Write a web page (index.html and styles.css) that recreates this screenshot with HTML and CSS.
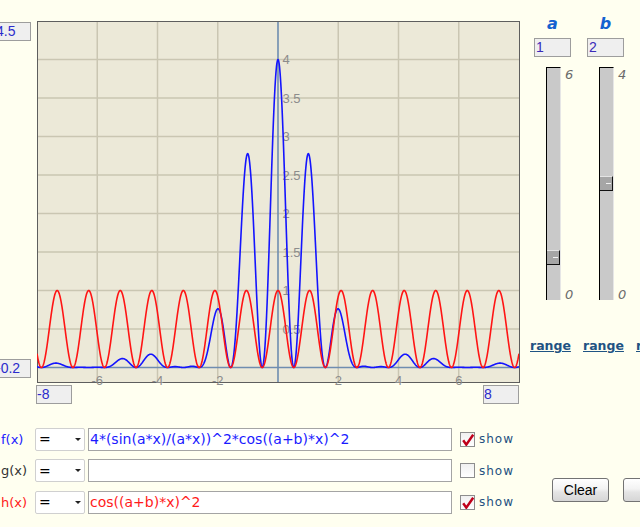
FILE: index.html
```html
<!DOCTYPE html>
<html>
<head>
<meta charset="utf-8">
<title>Function plotter</title>
<link rel="stylesheet" href="styles.css">
</head>
<body>
<div class="app">
  <div class="top">
    <div class="graph">
      <div class="ycol">
        <div class="numbox ybox">4.5</div>
        <div class="numbox ybox">-0.2</div>
      </div>
      <div class="plot">
        <svg class="plot-svg" width="483" height="366" viewBox="0 0 483 366">
          <defs><clipPath id="clip"><rect x="0" y="0" width="482" height="361.5"/></clipPath></defs>
          <rect class="bg" x="0" y="0" width="483" height="362"/>
          <g class="grid">
            <line x1="60.25" y1="0" x2="60.25" y2="362"/>
            <line x1="120.5" y1="0" x2="120.5" y2="362"/>
            <line x1="180.75" y1="0" x2="180.75" y2="362"/>
            <line x1="301.25" y1="0" x2="301.25" y2="362"/>
            <line x1="361.5" y1="0" x2="361.5" y2="362"/>
            <line x1="421.75" y1="0" x2="421.75" y2="362"/>
            <line x1="0" y1="38.5" x2="483" y2="38.5"/>
            <line x1="0" y1="77" x2="483" y2="77"/>
            <line x1="0" y1="115.5" x2="483" y2="115.5"/>
            <line x1="0" y1="154" x2="483" y2="154"/>
            <line x1="0" y1="192.5" x2="483" y2="192.5"/>
            <line x1="0" y1="231" x2="483" y2="231"/>
            <line x1="0" y1="269.5" x2="483" y2="269.5"/>
            <line x1="0" y1="308" x2="483" y2="308"/>
          </g>
          <g class="axes">
            <line x1="241" y1="0" x2="241" y2="362"/>
            <line x1="0" y1="346.5" x2="483" y2="346.5"/>
          </g>
          <rect class="frame" x="0.5" y="0.5" width="482" height="361"/>
          <g class="ticks">
            <text x="245.5" y="43.2">4</text>
            <text x="245.5" y="81.7">3.5</text>
            <text x="245.5" y="120.2">3</text>
            <text x="245.5" y="158.7">2.5</text>
            <text x="245.5" y="197.2">2</text>
            <text x="245.5" y="235.7">1.5</text>
            <text x="245.5" y="274.2">1</text>
            <text x="245.5" y="312.7">0.5</text>
            <text class="xt" x="60.25" y="363.5">-6</text>
            <text class="xt" x="120.5" y="363.5">-4</text>
            <text class="xt" x="180.75" y="363.5">-2</text>
            <text class="xt" x="301.25" y="363.5">2</text>
            <text class="xt" x="361.5" y="363.5">4</text>
            <text class="xt" x="421.75" y="363.5">6</text>
          </g>
          <g clip-path="url(#clip)">
            <path id="curve-f" class="curve cf" d=""/>
            <path id="curve-h" class="curve ch" d=""/>
          </g>
        </svg>
      </div>
      <div class="xrow">
        <div class="numbox xbox">-8</div>
        <div class="numbox xbox">8</div>
      </div>
    </div>

    <div class="params">
      <div class="param">
        <div class="pname">a</div>
        <div class="numbox pbox">1</div>
        <div class="slider">
          <div class="track"><div class="thumb" style="top:182px"></div></div>
          <div class="scale"><span>6</span><span>0</span></div>
        </div>
        <a class="range" href="#">range</a>
      </div>
      <div class="param">
        <div class="pname">b</div>
        <div class="numbox pbox">2</div>
        <div class="slider">
          <div class="track"><div class="thumb" style="top:108px"></div></div>
          <div class="scale"><span>4</span><span>0</span></div>
        </div>
        <a class="range" href="#">range</a>
      </div>
      <div class="param">
        <div class="pname"></div>
        <div class="numbox pbox"></div>
        <div class="slider">
          <div class="track"></div>
        </div>
        <a class="range" href="#">range</a>
      </div>
    </div>
  </div>

  <div class="eqs">
    <div class="rows">
      <div class="row">
        <div class="fn blue">f(x)</div>
        <div class="sel"><span class="eq">=</span><span class="arrow"></span></div>
        <input class="expr blue" type="text" value="4*(sin(a*x)/(a*x))^2*cos((a+b)*x)^2">
        <label class="chk">
          <span class="box"><svg width="13" height="13" viewBox="0 0 13 13"><path d="M2.2 7.2 L5.3 11.6 L12.2 1.6" /></svg></span>
          <span class="show">show</span>
        </label>
      </div>
      <div class="row">
        <div class="fn gray">g(x)</div>
        <div class="sel"><span class="eq">=</span><span class="arrow"></span></div>
        <input class="expr" type="text" value="">
        <label class="chk">
          <span class="box"></span>
          <span class="show">show</span>
        </label>
      </div>
      <div class="row">
        <div class="fn red">h(x)</div>
        <div class="sel"><span class="eq">=</span><span class="arrow"></span></div>
        <input class="expr red" type="text" value="cos((a+b)*x)^2">
        <label class="chk">
          <span class="box"><svg width="13" height="13" viewBox="0 0 13 13"><path d="M2.2 7.2 L5.3 11.6 L12.2 1.6" /></svg></span>
          <span class="show">show</span>
        </label>
      </div>
    </div>
    <div class="btns">
      <button class="btn" type="button">Clear</button>
      <button class="btn wide" type="button"></button>
    </div>
  </div>
</div>
<script src="script.js"></script>
</body>
</html>
```

FILE: styles.css
```css
html, body {
  margin: 0;
  padding: 0;
  overflow: hidden;
}
body {
  width: 640px;
  height: 527px;
  background: #fffff0;
  font-family: "DejaVu Sans", Verdana, sans-serif;
}
.app {
  width: 640px;
  overflow: hidden;
}
.top {
  display: flex;
  height: 405px;
}
.graph {
  display: grid;
  grid-template-columns: 37px 483px;
  grid-template-rows: 21px 362px 22px;
  flex: none;
}
.ycol {
  grid-row: 2;
  grid-column: 1;
  display: flex;
  flex-direction: column;
  justify-content: space-between;
  padding: 1px 0 5px 0;
  box-sizing: border-box;
}
.plot {
  grid-row: 2;
  grid-column: 2;
  position: relative;
  z-index: 1;
}
.xrow {
  grid-row: 3;
  grid-column: 2;
  display: flex;
  justify-content: space-between;
  padding-top: 2px;
  margin-left: -1px;
  margin-right: 1px;
  position: relative;
  z-index: 2;
}
.numbox {
  box-sizing: border-box;
  height: 19px;
  border: 1px solid #9d9d9d;
  background: #efefef;
  font-family: "Liberation Sans", Arial, sans-serif;
  font-size: 14px;
  line-height: 17px;
  color: #2b2bcc;
  padding: 0;
  white-space: nowrap;
  overflow: hidden;
}
.ybox {
  width: 36px;
  margin-left: -5px;
}
.xbox {
  width: 36px;
}

/* plot */
.plot-svg {
  display: block;
  overflow: visible;
}
.plot-svg .bg { fill: #ece9d8; }
.grid line { stroke: #cac6b2; stroke-width: 1.5; }
.axes line { stroke: #6f8db0; stroke-width: 1.6; }
.frame { fill: none; stroke: #5e5e5e; stroke-width: 1; }
.ticks text {
  font-family: "Liberation Sans", Arial, sans-serif;
  font-size: 13px;
  fill: #8c8c8c;
}
.ticks .xt { text-anchor: middle; }
.curve { fill: none; stroke-width: 1.6; stroke-linejoin: round; }
.cf { stroke: #1414ff; }
.ch { stroke: #ff1414; }

/* parameter sliders */
.params {
  display: flex;
  margin-left: 10px;
  padding-top: 13px;
  flex: none;
}
.param {
  width: 53px;
  flex: none;
}
.pname {
  width: 37px;
  margin-left: 4px;
  height: 22px;
  line-height: 22px;
  text-align: center;
  font-size: 16px;
  font-weight: bold;
  font-style: italic;
  color: #1462d0;
}
.pbox {
  width: 37px;
  margin: 3px 0 0 4px;
  padding-left: 1px;
  color: #3a2ab8;
}
.slider {
  display: flex;
  align-items: flex-start;
  height: 233px;
  margin: 10px 0 0 16px;
}
.track {
  position: relative;
  width: 15px;
  height: 233px;
  box-sizing: border-box;
  border-left: 1px solid #000;
  border-top: 1px solid #000;
  border-right: 1px solid #e6e6e6;
  background: #c9c9c9;
  flex: none;
}
.thumb {
  position: absolute;
  left: 0;
  right: 0;
  height: 15px;
  box-sizing: border-box;
  background: #a6a6a6;
  border-top: 1px solid #e4e4e4;
  border-right: 1px solid #111;
  border-bottom: 1px solid #111;
}
.thumb::after {
  content: "";
  position: absolute;
  right: 1px;
  top: 6px;
  width: 5px;
  height: 1px;
  background: #f2f2f2;
}
.scale {
  display: flex;
  flex-direction: column;
  justify-content: space-between;
  height: 235px;
  box-sizing: border-box;
  padding-top: 1px;
  margin-left: 4px;
  font-size: 13px;
  font-style: italic;
  line-height: 14px;
  color: #6b6b6b;
}
.range {
  display: block;
  margin-top: 38px;
  font-size: 12.5px;
  font-weight: bold;
  line-height: 16px;
  color: #1f5383;
  text-decoration: underline;
  white-space: nowrap;
}

/* equations */
.eqs {
  display: flex;
  margin-top: 22px;
}
.rows {
  width: 552px;
  flex: none;
}
.row {
  display: flex;
  align-items: center;
  height: 24px;
  margin-bottom: 7.5px;
}
.fn {
  width: 35px;
  box-sizing: border-box;
  padding-left: 1px;
  font-size: 13px;
  flex: none;
}
.blue { color: #1a1aff; }
.red { color: #ff1a1a; }
.gray { color: #333; }
.sel {
  width: 50px;
  height: 23px;
  box-sizing: border-box;
  border: 1px solid #d0d0d0;
  border-radius: 2px;
  background: #fff;
  display: flex;
  align-items: center;
  justify-content: space-between;
  padding: 0 3px 0 3px;
  margin-right: 3px;
  flex: none;
}
.eq {
  font-size: 14px;
  color: #000;
}
.arrow {
  width: 0;
  height: 0;
  border-left: 3px solid transparent;
  border-right: 3px solid transparent;
  border-top: 3px solid #222;
}
.expr {
  width: 364px;
  height: 23px;
  box-sizing: border-box;
  margin: 0;
  border: 1px solid #a4a4a4;
  padding: 0 1px;
  font-family: "DejaVu Sans", Verdana, sans-serif;
  font-size: 14px;
  background: #fff;
  outline: none;
  flex: none;
}
.chk {
  display: flex;
  align-items: center;
  margin-left: 8px;
}
.box {
  width: 15px;
  height: 15px;
  box-sizing: border-box;
  border: 1px solid #8d8d8d;
  background: linear-gradient(#f0f0f0, #ffffff);
  display: block;
  flex: none;
}
.box svg {
  display: block;
}
.box path {
  fill: none;
  stroke: #c0001a;
  stroke-width: 2.5;
}
.show {
  margin-left: 4px;
  font-size: 12px;
  letter-spacing: 1px;
  color: #245080;
}
.btns {
  display: flex;
  gap: 14px;
  padding-top: 51px;
}
.btn {
  width: 57px;
  height: 24px;
  box-sizing: border-box;
  border: 1px solid #737373;
  border-radius: 3px;
  background: linear-gradient(#ffffff, #f3f3f3 45%, #e4e4e4 60%, #d6d6d6);
  font-family: "Liberation Sans", Arial, sans-serif;
  font-size: 14px;
  color: #000;
  padding: 0;
  flex: none;
}
.btn.wide {
  width: 80px;
}
```

FILE: script.js
```js
(function () {
  var a = 1, b = 2;
  function X(x) { return (x + 8) * 30.125; }
  function Y(y) { return (4.5 - y) * 77; }
  function f(x) {
    var c = Math.cos((a + b) * x);
    if (Math.abs(x) < 1e-9) return 4 * c * c;
    var s = Math.sin(a * x) / (a * x);
    return 4 * s * s * c * c;
  }
  function h(x) {
    var c = Math.cos((a + b) * x);
    return c * c;
  }
  function path(fn) {
    var d = [];
    for (var i = 0; i <= 1600; i++) {
      var x = -8 + i * 0.01;
      d.push((i ? "L" : "M") + X(x).toFixed(2) + " " + Y(fn(x)).toFixed(2));
    }
    return d.join("");
  }
  document.getElementById("curve-f").setAttribute("d", path(f));
  document.getElementById("curve-h").setAttribute("d", path(h));
})();
```
